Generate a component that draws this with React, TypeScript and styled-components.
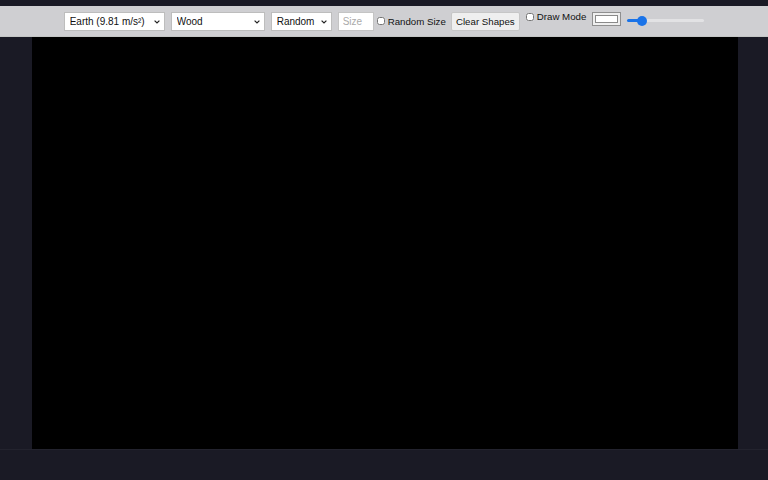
import React, { useState } from 'react';
import styled, { createGlobalStyle } from 'styled-components';

const GlobalStyle = createGlobalStyle`
  html, body {
    margin: 0;
    padding: 0;
    background: #191923;
    font-family: "Liberation Sans", Arial, sans-serif;
  }
`;

const Page = styled.div`
  width: 768px;
  height: 480px;
  display: flex;
  flex-direction: column;
  background: #1a1a25;
  padding-top: 6px;
  box-sizing: border-box;
`;

const Toolbar = styled.div`
  height: 31px;
  flex-shrink: 0;
  display: flex;
  align-items: center;
  justify-content: center;
  gap: 6px;
  background: #cfcfd2;
  border-bottom: 1px solid #c3c5c4;
  box-sizing: border-box;
`;

const SelectWrap = styled.span<{ $w: number }>`
  position: relative;
  display: inline-flex;
  width: ${(p) => p.$w}px;
  height: 19px;
`;

const Select = styled.select`
  appearance: none;
  width: 100%;
  height: 100%;
  font-family: "Liberation Sans", Arial, sans-serif;
  font-size: 10px;
  color: #111;
  background: #fff;
  border: 1px solid #bdbdbd;
  border-radius: 0;
  padding: 0 12px 0 5px;
  box-sizing: border-box;
  outline: none;
`;

const Chevron = styled.svg`
  position: absolute;
  right: 5px;
  top: 8px;
  width: 6px;
  height: 4px;
  pointer-events: none;
`;

const SizeInput = styled.input`
  width: 36px;
  height: 19px;
  font-family: "Liberation Sans", Arial, sans-serif;
  font-size: 10px;
  border: 1px solid #c4c4c4;
  padding: 0 4px;
  box-sizing: border-box;
  background: #fff;
  &::placeholder {
    color: #aaa;
  }
`;

const CheckLabel = styled.label<{ $top?: boolean }>`
  display: flex;
  align-items: center;
  gap: 2px;
  font-size: 9.7px;
  color: #111;
  align-self: ${(p) => (p.$top ? 'flex-start' : 'center')};
  margin-top: ${(p) => (p.$top ? '5px' : '0')};
  margin-left: ${(p) => (p.$top ? '0' : '-3px')};
`;

const Check = styled.input`
  width: 8px;
  height: 8px;
  margin: 0 1px 0 0;
`;

const Button = styled.button`
  width: 69px;
  height: 19px;
  font-family: "Liberation Sans", Arial, sans-serif;
  font-size: 9.7px;
  color: #111;
  background: #efefef;
  border: 1px solid #c6c6c6;
  border-radius: 2px;
  padding: 0;
  margin-left: -1px;
`;

const ColorBox = styled.div`
  width: 29px;
  height: 14px;
  background: #efefef;
  border: 1px solid #8f8f8f;
  box-sizing: border-box;
  padding: 2px;
  display: flex;
  margin-top: -4px;
  & > div {
    flex: 1;
    background: #fff;
    border: 1px solid #8a8a8a;
  }
`;

const Range = styled.input<{ $pct: number }>`
  appearance: none;
  width: 77px;
  height: 10px;
  margin: -1px 0 0 0;
  background: transparent;
  &::-webkit-slider-runnable-track {
    height: 3px;
    border-radius: 2px;
    background: linear-gradient(
      to right,
      #1a73e8 0 ${(p) => p.$pct}%,
      #e2e2e4 ${(p) => p.$pct}% 100%
    );
  }
  &::-webkit-slider-thumb {
    appearance: none;
    width: 10px;
    height: 10px;
    margin-top: -3.5px;
    border-radius: 50%;
    background: #1a73e8;
    border: none;
  }
`;

const Main = styled.div`
  flex: 1;
  display: flex;
  padding: 0 30px 0 32px;
  background: #1a1a25;
`;

const Canvas = styled.div`
  flex: 1;
  background: #000;
`;

const Footer = styled.div`
  height: 30px;
  flex-shrink: 0;
  background: #1a1a25;
  border-top: 1px solid #23232e;
`;

const Dropdown = ({ w, label }: { w: number; label: string }) => (
  <SelectWrap $w={w}>
    <Select defaultValue={label}>
      <option value={label}>{label}</option>
    </Select>
    <Chevron viewBox="0 0 6 4">
      <path d="M0.6 0.6 L3 3 L5.4 0.6" fill="none" stroke="#222" strokeWidth="1.2" />
    </Chevron>
  </SelectWrap>
);

export default function App() {
  const [size, setSize] = useState(15);
  return (
    <>
      <GlobalStyle />
      <Page>
        <Toolbar>
          <Dropdown w={101} label="Earth (9.81 m/s²)" />
          <Dropdown w={94} label="Wood" />
          <Dropdown w={61} label="Random" />
          <SizeInput placeholder="Size" />
          <CheckLabel>
            <Check type="checkbox" />
            Random Size
          </CheckLabel>
          <Button>Clear Shapes</Button>
          <CheckLabel $top>
            <Check type="checkbox" />
            Draw Mode
          </CheckLabel>
          <ColorBox>
            <div />
          </ColorBox>
          <Range
            type="range"
            min={0}
            max={100}
            value={size}
            $pct={size}
            onChange={(e) => setSize(Number(e.target.value))}
          />
        </Toolbar>
        <Main>
          <Canvas />
        </Main>
        <Footer />
      </Page>
    </>
  );
}
